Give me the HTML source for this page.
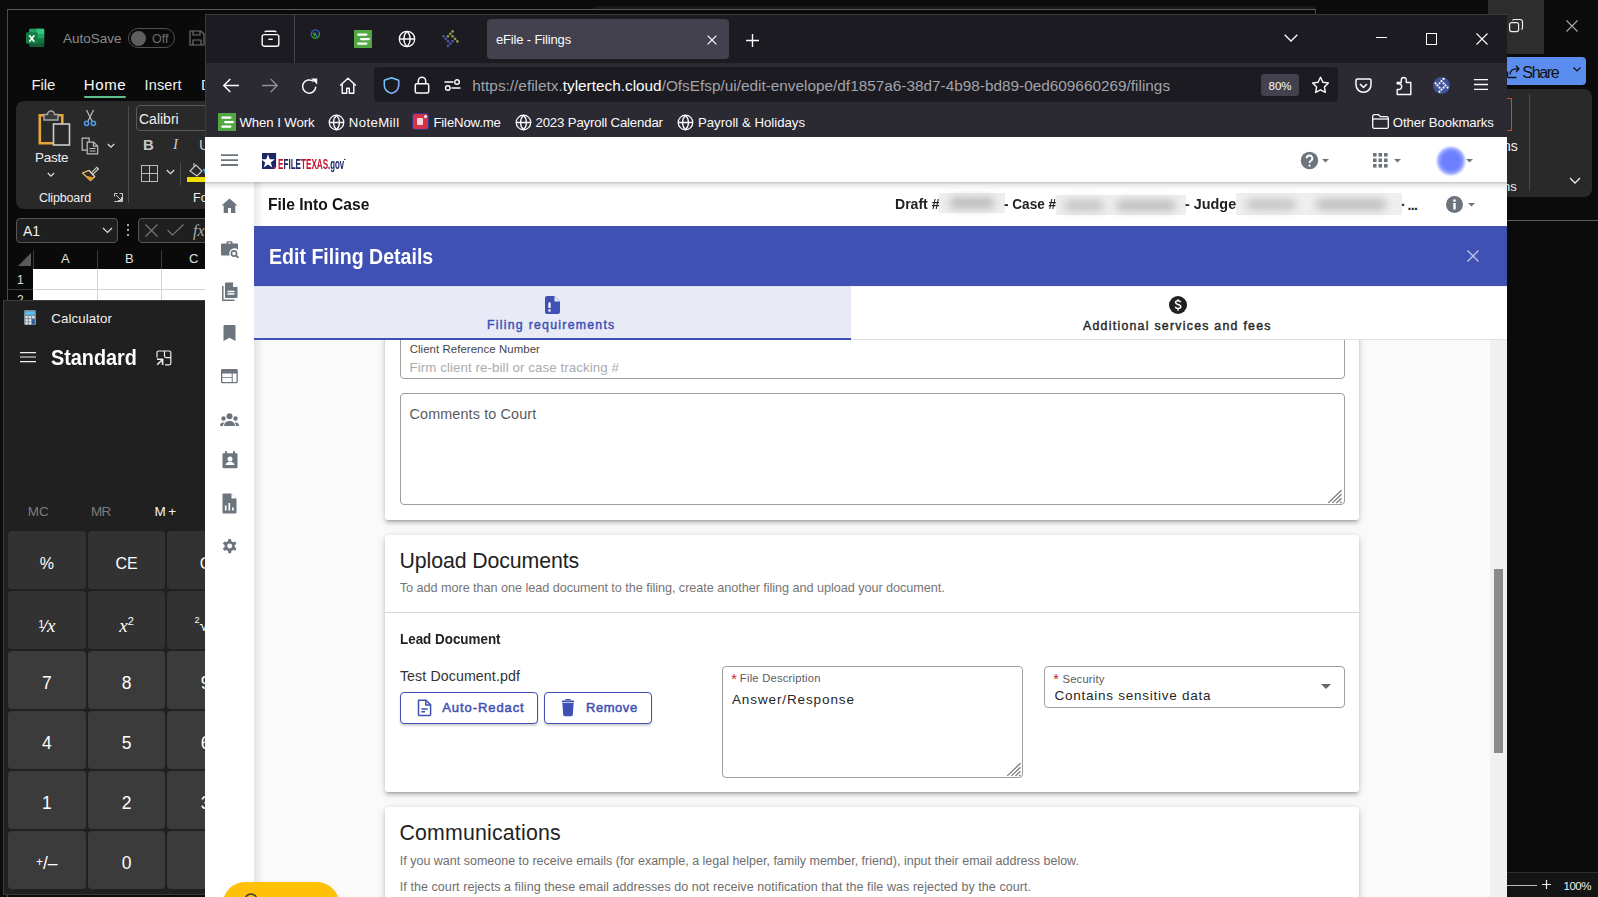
<!DOCTYPE html>
<html><head><meta charset="utf-8">
<style>
*{box-sizing:border-box;margin:0;padding:0}
html,body{width:1598px;height:897px;overflow:hidden;background:#0b0b0b;font-family:"Liberation Sans",sans-serif}
.a{position:absolute}
.t{position:absolute;white-space:nowrap;line-height:1}
svg.a{overflow:visible}
</style></head><body>
<!-- 10_excel.py -->
<div class="a" style="left:0px;top:0px;width:1598px;height:897px;background:#0b0b0b;"></div>
<div class="a" style="left:593px;top:5.5px;width:722px;height:5px;background:#181818;border-radius:4px 0 0 0"></div>
<div class="a" style="left:7px;top:9px;width:1309px;height:888px;background:#0a0a0a;border-left:1px solid #4a4a4a;border-top:1px solid #5c5c5c;border-right:1px solid #4a4a4a"></div>
<svg class="a" style="left:26px;top:28px" width="19" height="20" viewBox="0 0 19 20" ><rect x="3.2" y="0.8" width="15" height="18.2" rx="1.2" fill="#185c37"/><path d="M4.4 0.8h12.6a1.2 1.2 0 0 1 1.2 1.2v4.5H3.2V2a1.2 1.2 0 0 1 1.2-1.2z" fill="#21a366"/><path d="M10.7 0.8h6.3a1.2 1.2 0 0 1 1.2 1.2v4.5h-7.5z" fill="#33c481"/><rect x="3.2" y="6.4" width="15" height="4.3" fill="#21a366"/><rect x="3.2" y="10.6" width="15" height="4.3" fill="#107c41"/><rect x="0" y="4.3" width="11.6" height="11.4" rx="1.2" fill="#107c41"/><path d="M3.3 7.3l5 6.4M8.3 7.3l-5 6.4" stroke="#fff" stroke-width="1.7"/></svg>
<div class="t" style="left:63px;top:32.00px;font-size:13.5px;color:#8c8c8c;">AutoSave</div>
<div class="a" style="left:128px;top:28px;width:47px;height:20px;border:1.3px solid #505050;border-radius:10px"></div>
<div class="a" style="left:131px;top:31px;width:15px;height:15px;background:#5e5e5e;border-radius:50%"></div>
<div class="t" style="left:152px;top:33.00px;font-size:12.5px;color:#6e6e6e;">Off</div>
<svg class="a" style="left:189px;top:30px" width="16" height="16" viewBox="0 0 16 16" fill="none" stroke="#707070" stroke-width="1.2"><path d="M1 1h11l3 3v11H1z"/><path d="M4 1v4h7V1M4 15v-5h8v5"/></svg>
<div class="t" style="left:31.5px;top:77.00px;font-size:15px;color:#f0f0f0;letter-spacing:-0.09px;">File</div>
<div class="t" style="left:83.7px;top:77.00px;font-size:15px;color:#ffffff;letter-spacing:0.663px;">Home</div>
<div class="a" style="left:84px;top:95.5px;width:42px;height:2.5px;background:#5cc18a;border-radius:1px"></div>
<div class="t" style="left:144.61999999999998px;top:78.00px;font-size:14.5px;color:#f0f0f0;letter-spacing:0.119px;">Insert</div>
<div class="t" style="left:201px;top:77.00px;font-size:15px;color:#f0f0f0;">Data</div>
<div class="a" style="left:16px;top:101px;width:1300px;height:108px;background:#292929;border-radius:8px"></div>
<svg class="a" style="left:37px;top:109px" width="35" height="38" viewBox="0 0 35 38" ><path d="M2.8 6.3h22.5v28H2.8z" fill="none" stroke="#e8a33a" stroke-width="2.6"/><path d="M7 11V5.5h3.5a3.5 3.5 0 0 1 7 0H21V11z" fill="#3a3a3a" stroke="#a8a8a8" stroke-width="1.4"/><rect x="16.5" y="15" width="16" height="21" fill="#292929" stroke="#cccccc" stroke-width="1.6"/></svg>
<div class="t" style="left:34.96px;top:151.00px;font-size:13.5px;color:#f0f0f0;letter-spacing:-0.26px;">Paste</div>
<svg class="a" style="left:47px;top:172px" width="8" height="6" viewBox="0 0 8 6" fill="none" stroke="#ddd" stroke-width="1.3"><path d="M0.8 1l3.2 3.2L7.2 1"/></svg>
<svg class="a" style="left:83px;top:109px" width="14" height="18" viewBox="0 0 14 18" fill="none"><path d="M3.5 1l5.5 11M10.5 1L5 12" stroke="#c8c8c8" stroke-width="1.1"/><circle cx="3.6" cy="14.3" r="2.1" stroke="#4f9ee8" stroke-width="1.5"/><circle cx="10.4" cy="14.3" r="2.1" stroke="#4f9ee8" stroke-width="1.5"/></svg>
<svg class="a" style="left:81px;top:137px" width="18" height="18" viewBox="0 0 18 18" fill="none" stroke="#bdbdbd" stroke-width="1.2"><path d="M1.2 1.2h7v12h-7z"/><path d="M6.2 5.2h6.5l4 4v7.6H6.2z" fill="#292929"/><path d="M12.5 5.2v4h4M8.5 11.5h6M8.5 14h6"/></svg>
<svg class="a" style="left:107px;top:143px" width="8" height="6" viewBox="0 0 8 6" fill="none" stroke="#ddd" stroke-width="1.3"><path d="M0.8 1l3.2 3.2L7.2 1"/></svg>
<svg class="a" style="left:82px;top:166px" width="17" height="16" viewBox="0 0 17 16" ><path d="M0.5 7l8 7.6 4.3-3.8-5.8-6.4z" fill="none" stroke="#f2c46a" stroke-width="1.2" stroke-linejoin="round"/><path d="M3.5 9.6l5 4.7 3.3-2.8z" fill="#e8961e"/><path d="M7 4.4l5.8 6.4" stroke="#cfcfcf" stroke-width="1.3"/><path d="M9.6 6.6l5.2-5.2 1.6 1.6-5.2 5.2" fill="none" stroke="#cfcfcf" stroke-width="1.2"/></svg>
<div class="t" style="left:38.9px;top:192.00px;font-size:12.5px;color:#f0f0f0;letter-spacing:-0.163px;">Clipboard</div>
<svg class="a" style="left:114px;top:193px" width="9" height="9" viewBox="0 0 9 9" fill="none" stroke="#ccc" stroke-width="1"><path d="M0.5 3.5v-3h3M0.5 8.5h8v-8h-3M2 2l5.5 5.5M4 7.5h3.5V4"/></svg>
<div class="a" style="left:127.5px;top:106px;width:1px;height:97px;background:#4a4a4a;"></div>
<div class="a" style="left:136px;top:105px;width:140px;height:26px;background:#292929;border:1px solid #5a5a5a;border-radius:4px"></div>
<div class="t" style="left:139px;top:112.00px;font-size:14px;color:#f0f0f0;">Calibri</div>
<div class="t" style="left:143px;top:137.00px;font-size:15px;color:#c8c8c8;font-weight:bold;">B</div>
<div class="t" style="left:173px;top:137.30px;font-size:15px;color:#c8c8c8;font-family:'Liberation Serif',serif;font-style:italic;">I</div>
<div class="t" style="left:199px;top:137.00px;font-size:15px;color:#c8c8c8;">U</div>
<svg class="a" style="left:141px;top:165px" width="17" height="17" viewBox="0 0 17 17" fill="none" stroke="#bbb" stroke-width="1"><rect x="0.5" y="0.5" width="16" height="16"/><path d="M8.5 0.5v16M0.5 8.5h16"/></svg>
<svg class="a" style="left:166px;top:169px" width="9" height="6" viewBox="0 0 9 6" fill="none" stroke="#ddd" stroke-width="1.3"><path d="M0.8 1l3.7 3.7L8.2 1"/></svg>
<div class="a" style="left:180px;top:163px;width:1px;height:22px;background:#4a4a4a;"></div>
<svg class="a" style="left:188px;top:163px" width="20" height="14" viewBox="0 0 20 14" fill="none" stroke="#ccc" stroke-width="1.1"><path d="M2 8l6-6 6 6-5 5z"/><path d="M6 0v4"/><path d="M15.5 6c1.5 2 2 4 2 5" stroke="#4f9ee8" stroke-width="2"/></svg>
<div class="a" style="left:187px;top:177px;width:30px;height:5px;background:#f0e000;"></div>
<div class="t" style="left:193px;top:192.00px;font-size:12.5px;color:#f0f0f0;">Font</div>
<div class="a" style="left:16px;top:218px;width:102px;height:25px;background:#1f1f1f;border:1px solid #555;border-radius:4px"></div>
<div class="t" style="left:23px;top:224.00px;font-size:14px;color:#f0f0f0;">A1</div>
<svg class="a" style="left:102px;top:227px" width="11" height="7" viewBox="0 0 11 7" fill="none" stroke="#ddd" stroke-width="1.2"><path d="M1 1l4.5 4.5L10 1"/></svg>
<div class="a" style="left:127px;top:224px;width:2.2px;height:2.2px;background:#ddd;border-radius:1px"></div>
<div class="a" style="left:127px;top:229px;width:2.2px;height:2.2px;background:#ddd;border-radius:1px"></div>
<div class="a" style="left:127px;top:234px;width:2.2px;height:2.2px;background:#ddd;border-radius:1px"></div>
<div class="a" style="left:138px;top:218px;width:600px;height:25px;background:#1f1f1f;border:1px solid #555;border-radius:4px"></div>
<svg class="a" style="left:145px;top:224px" width="13" height="13" viewBox="0 0 13 13" stroke="#777" stroke-width="1.1"><path d="M0.5 0.5l12 12M12.5 0.5l-12 12"/></svg>
<svg class="a" style="left:167px;top:224px" width="17" height="12" viewBox="0 0 17 12" fill="none" stroke="#777" stroke-width="1.1"><path d="M0.5 6l5 5L16.5 0.5"/></svg>
<div class="t" style="left:193px;top:223.46px;font-size:16px;color:#aaa;font-family:'Liberation Serif',serif;font-style:italic;">fx</div>
<svg class="a" style="left:18px;top:253px" width="13" height="13" viewBox="0 0 13 13" ><path d="M13 0v13H0z" fill="#5a5a5a"/></svg>
<div class="a" style="left:33px;top:250px;width:1px;height:19px;background:#3a3a3a;"></div>
<div class="a" style="left:97px;top:250px;width:1px;height:19px;background:#3a3a3a;"></div>
<div class="a" style="left:161px;top:250px;width:1px;height:19px;background:#3a3a3a;"></div>
<div class="t" style="left:61px;top:252.00px;font-size:13px;color:#e0e0e0;">A</div>
<div class="t" style="left:125px;top:252.00px;font-size:13px;color:#e0e0e0;">B</div>
<div class="t" style="left:189px;top:252.00px;font-size:13px;color:#e0e0e0;">C</div>
<div class="a" style="left:33px;top:269px;width:1283px;height:40px;background:#ffffff;"></div>
<div class="a" style="left:33px;top:289px;width:1283px;height:1px;background:#d4d4d4;"></div>
<div class="a" style="left:97px;top:269px;width:1px;height:40px;background:#d4d4d4;"></div>
<div class="a" style="left:161px;top:269px;width:1px;height:40px;background:#d4d4d4;"></div>
<div class="a" style="left:8px;top:289px;width:25px;height:1px;background:#3a3a3a;"></div>
<div class="t" style="left:17px;top:274.00px;font-size:12px;color:#e0e0e0;">1</div>
<div class="t" style="left:17px;top:294.00px;font-size:12px;color:#e0e0e0;">2</div>
<div class="a" style="left:1488px;top:0px;width:56px;height:54px;background:#2d2d2d;"></div>
<svg class="a" style="left:1509px;top:19px" width="14" height="13" viewBox="0 0 14 13" fill="none" stroke="#eee" stroke-width="1.2"><rect x="0.6" y="3.6" width="9" height="9" rx="2"/><path d="M3.5 1.5a2 2 0 0 1 2-1h5.5a2.5 2.5 0 0 1 2.5 2.5v5.5a2 2 0 0 1-1 2"/></svg>
<svg class="a" style="left:1566px;top:20px" width="12" height="12" viewBox="0 0 12 12" stroke="#aaa" stroke-width="1.1"><path d="M0.5 0.5l11 11M11.5 0.5l-11 11"/></svg>
<div class="a" style="left:1480px;top:57px;width:106px;height:28px;background:#5b8def;border-radius:4px"></div>
<div class="t" style="left:1522.36px;top:65.00px;font-size:16px;color:#111;letter-spacing:-1.354px;">Share</div>
<svg class="a" style="left:1505px;top:63px" width="16" height="16" viewBox="0 0 16 16" fill="none" stroke="#111" stroke-width="1.3" stroke-linejoin="round"><path d="M2.5 8.5v4.8a1.2 1.2 0 0 0 1.2 1.2h7.8"/><path d="M4.8 11.5c.4-3.4 2.8-5.6 6.6-5.6h1.8M11 2.8l3 3.1-3 3.1"/></svg>
<svg class="a" style="left:1573px;top:67px" width="8" height="5" viewBox="0 0 8 5" fill="none" stroke="#111" stroke-width="1.2"><path d="M0.5 0.5l3.5 3.5 3.5-3.5"/></svg>
<div class="a" style="left:1460px;top:89px;width:132px;height:108px;background:#292929;border-radius:8px"></div>
<div class="a" style="left:1500px;top:98px;width:12px;height:33px;border:1px solid #d14e1a"></div>
<div class="t" style="left:1503px;top:139.00px;font-size:14px;color:#f0f0f0;">ns</div>
<div class="t" style="left:1503px;top:180.00px;font-size:13px;color:#f0f0f0;">ns</div>
<div class="a" style="left:1529px;top:94px;width:1px;height:97px;background:#4a4a4a;"></div>
<svg class="a" style="left:1569px;top:177px" width="12" height="7" viewBox="0 0 12 7" fill="none" stroke="#eee" stroke-width="1.3"><path d="M1 1l5 5 5-5"/></svg>
<div class="a" style="left:1507px;top:220px;width:91px;height:1px;background:#5a5a5a;"></div>
<div class="a" style="left:1507px;top:872px;width:91px;height:1px;background:#2e2e2e;"></div>
<div class="a" style="left:1507px;top:873px;width:91px;height:24px;background:#141414;"></div>
<div class="a" style="left:1507px;top:885px;width:30px;height:1.2px;background:#bbb;"></div>
<svg class="a" style="left:1542px;top:880px" width="9" height="9" viewBox="0 0 9 9" stroke="#eee" stroke-width="1.2"><path d="M4.5 0v9M0 4.5h9"/></svg>
<div class="t" style="left:1563.54px;top:881.00px;font-size:11.5px;color:#eee;letter-spacing:-0.498px;">100%</div>
<!-- 20_calc.py -->
<div class="a" style="left:3px;top:300px;width:215px;height:595px;background:#202020;border-left:1px solid #3c3c3c;border-top:1px solid #3c3c3c;border-bottom:1px solid #3a3a3a"></div>
<svg class="a" style="left:24px;top:310px" width="12" height="15" viewBox="0 0 12 15" ><rect x="0" y="0" width="12" height="15" rx="1.2" fill="#7a8a9a"/><rect x="1.5" y="1.5" width="9" height="3.2" fill="#4fc3f7"/><g fill="#e8e8e8"><rect x="1.5" y="6" width="2.3" height="2.2"/><rect x="4.85" y="6" width="2.3" height="2.2"/><rect x="8.2" y="6" width="2.3" height="2.2"/><rect x="1.5" y="9.2" width="2.3" height="2.2"/><rect x="4.85" y="9.2" width="2.3" height="2.2"/><rect x="1.5" y="12.2" width="2.3" height="2.2"/><rect x="4.85" y="12.2" width="2.3" height="2.2"/></g><rect x="8.2" y="9.2" width="2.3" height="5.2" fill="#1e5aa8"/></svg>
<div class="t" style="left:51.367999999999995px;top:312.00px;font-size:13.3px;color:#f0f0f0;letter-spacing:0.076px;">Calculator</div>
<svg class="a" style="left:20px;top:352px" width="16" height="11" viewBox="0 0 16 11" stroke="#eee" stroke-width="1.1"><path d="M0 0.6h16M0 5h16M0 9.6h16"/></svg>
<div class="t" style="left:51.107331362142105px;top:348.00px;font-size:21.5px;color:#ffffff;font-weight:bold;transform:scaleX(0.9217);transform-origin:0 0;">Standard</div>
<svg class="a" style="left:155.5px;top:349.5px" width="16" height="16" viewBox="0 0 16 16" fill="none" stroke="#eee" stroke-width="1.2"><path d="M1 7.5V2.5A1.5 1.5 0 0 1 2.5 1h10.8a1.5 1.5 0 0 1 1.5 1.5v10.8a1.5 1.5 0 0 1-1.5 1.5H9M8.5 1v4.8a1.8 1.8 0 0 0 1.8 1.8h4.5"/><path d="M1.2 14.8L6 10M1 9.3h5.6v5.6" stroke-width="1.6"/></svg>
<div class="t" style="left:27.66px;top:505.00px;font-size:13.5px;color:#7c7c7c;letter-spacing:0.085px;">MC</div>
<div class="t" style="left:90.96px;top:505.00px;font-size:13.5px;color:#7c7c7c;letter-spacing:-0.615px;">MR</div>
<div class="t" style="left:154.46px;top:505.00px;font-size:13.5px;color:#f2f2f2;letter-spacing:2.551px;">M+</div>
<div class="a" style="left:8px;top:531px;width:77.5px;height:57.5px;background:#323232;border-radius:4px"></div>
<div class="t" style="left:8px;top:556.00px;font-size:16px;color:#ffffff;width:77.5px;text-align:center;">%</div>
<div class="a" style="left:88px;top:531px;width:77px;height:57.5px;background:#323232;border-radius:4px"></div>
<div class="t" style="left:88px;top:556.00px;font-size:16px;color:#ffffff;width:77px;text-align:center;">CE</div>
<div class="a" style="left:167px;top:531px;width:77px;height:57.5px;background:#323232;border-radius:4px"></div>
<div class="t" style="left:167px;top:556.00px;font-size:16px;color:#ffffff;width:77px;text-align:center;">C</div>
<div class="a" style="left:8px;top:591px;width:77.5px;height:57.5px;background:#323232;border-radius:4px"></div>
<div class="t" style="left:8px;top:616.00px;font-size:16px;color:#ffffff;width:77.5px;text-align:center;"><span style="font-size:11px;vertical-align:4px">1</span>&#8260;<i style="font-family:'Liberation Serif',serif;font-size:19px">x</i></div>
<div class="a" style="left:88px;top:591px;width:77px;height:57.5px;background:#323232;border-radius:4px"></div>
<div class="t" style="left:88px;top:616.00px;font-size:16px;color:#ffffff;width:77px;text-align:center;"><i style="font-family:'Liberation Serif',serif;font-size:19px">x</i><span style="font-size:11px;vertical-align:7px">2</span></div>
<div class="a" style="left:167px;top:591px;width:77px;height:57.5px;background:#323232;border-radius:4px"></div>
<div class="t" style="left:167px;top:616.00px;font-size:16px;color:#ffffff;width:77px;text-align:center;"><span style="font-size:9px;vertical-align:8px">2</span>&#8730;x</div>
<div class="a" style="left:8px;top:651px;width:77.5px;height:57.5px;background:#3b3b3b;border-radius:4px"></div>
<div class="t" style="left:8px;top:675.00px;font-size:17.5px;color:#ffffff;width:77.5px;text-align:center;">7</div>
<div class="a" style="left:88px;top:651px;width:77px;height:57.5px;background:#3b3b3b;border-radius:4px"></div>
<div class="t" style="left:88px;top:675.00px;font-size:17.5px;color:#ffffff;width:77px;text-align:center;">8</div>
<div class="a" style="left:167px;top:651px;width:77px;height:57.5px;background:#3b3b3b;border-radius:4px"></div>
<div class="t" style="left:167px;top:675.00px;font-size:17.5px;color:#ffffff;width:77px;text-align:center;">9</div>
<div class="a" style="left:8px;top:711px;width:77.5px;height:57.5px;background:#3b3b3b;border-radius:4px"></div>
<div class="t" style="left:8px;top:735.00px;font-size:17.5px;color:#ffffff;width:77.5px;text-align:center;">4</div>
<div class="a" style="left:88px;top:711px;width:77px;height:57.5px;background:#3b3b3b;border-radius:4px"></div>
<div class="t" style="left:88px;top:735.00px;font-size:17.5px;color:#ffffff;width:77px;text-align:center;">5</div>
<div class="a" style="left:167px;top:711px;width:77px;height:57.5px;background:#3b3b3b;border-radius:4px"></div>
<div class="t" style="left:167px;top:735.00px;font-size:17.5px;color:#ffffff;width:77px;text-align:center;">6</div>
<div class="a" style="left:8px;top:771px;width:77.5px;height:57.5px;background:#3b3b3b;border-radius:4px"></div>
<div class="t" style="left:8px;top:795.00px;font-size:17.5px;color:#ffffff;width:77.5px;text-align:center;">1</div>
<div class="a" style="left:88px;top:771px;width:77px;height:57.5px;background:#3b3b3b;border-radius:4px"></div>
<div class="t" style="left:88px;top:795.00px;font-size:17.5px;color:#ffffff;width:77px;text-align:center;">2</div>
<div class="a" style="left:167px;top:771px;width:77px;height:57.5px;background:#3b3b3b;border-radius:4px"></div>
<div class="t" style="left:167px;top:795.00px;font-size:17.5px;color:#ffffff;width:77px;text-align:center;">3</div>
<div class="a" style="left:8px;top:831px;width:77.5px;height:57.5px;background:#3b3b3b;border-radius:4px"></div>
<div class="t" style="left:8px;top:855.00px;font-size:17.5px;color:#ffffff;width:77.5px;text-align:center;"><span style="font-size:12px;vertical-align:3px">+</span>/&#8211;</div>
<div class="a" style="left:88px;top:831px;width:77px;height:57.5px;background:#3b3b3b;border-radius:4px"></div>
<div class="t" style="left:88px;top:855.00px;font-size:17.5px;color:#ffffff;width:77px;text-align:center;">0</div>
<div class="a" style="left:167px;top:831px;width:77px;height:57.5px;background:#3b3b3b;border-radius:4px"></div>
<div class="t" style="left:167px;top:855.00px;font-size:17.5px;color:#ffffff;width:77px;text-align:center;"></div>
<!-- 30_ffchrome.py -->
<div class="a" style="left:205px;top:14px;width:1302px;height:883px;background:#fafafa;"></div>
<div class="a" style="left:205px;top:14px;width:1302px;height:49px;background:#1c1b22;border-top:1px solid #3b3a41;border-left:1px solid #3b3a41"></div>
<div class="a" style="left:294px;top:14px;width:1px;height:49px;background:#45444b;"></div>
<svg class="a" style="left:261px;top:30px" width="19" height="17" viewBox="0 0 19 17" fill="none" stroke="#fbfbfe" stroke-width="1.4"><path d="M3.8 2.2a2 2 0 0 1 1.6-.9h8.2a2 2 0 0 1 1.6 .9"/><rect x="1.2" y="4.6" width="16.6" height="11.6" rx="2"/><path d="M7.3 9.3h4.4"/></svg>
<svg class="a" style="left:310px;top:29px" width="11" height="11" viewBox="0 0 11 11" ><path d="M1.5 6.6A4.1 4.1 0 0 1 9.2 3.6" fill="none" stroke="#2f62c0" stroke-width="1.3"/><path d="M9.2 3.6A4.1 4.1 0 0 1 1.5 6.6" fill="none" stroke="#3e9a3a" stroke-width="1.3"/><path d="M3.3 3.6l1.8 3.6" stroke="#49a83e" stroke-width="1.4"/><path d="M5.4 3.6l1.3 4.2" stroke="#3a70d0" stroke-width="1.2"/></svg>
<svg class="a" style="left:354px;top:30px" width="18" height="18" viewBox="0 0 18 18" ><rect width="18" height="18" fill="#52a742"/><path d="M4.3 4.6h8.1M7.1 9.1h7.8M4.3 13.6h8.1" stroke="#fff" stroke-width="2.2" stroke-linecap="round"/></svg>
<svg class="a" style="left:398px;top:30px" width="18" height="18" viewBox="0 0 18 18" fill="none" stroke="#fbfbfe" stroke-width="1.3"><circle cx="9" cy="9" r="7.7"/><path d="M9 1.3c-4.2 4.2-4.2 11.2 0 15.4M9 1.3c4.2 4.2 4.2 11.2 0 15.4M1.3 9h15.4"/></svg>
<svg class="a" style="left:438px;top:26px" width="26" height="26" viewBox="0 0 26 26" ><circle cx="14.6" cy="5.4" r="1.35" fill="#8c9c42"/><circle cx="12.3" cy="7.8" r="1.35" fill="#8c9c42"/><circle cx="10" cy="10.3" r="1.35" fill="#8c9c42"/><circle cx="14.6" cy="10.3" r="1.35" fill="#8c9c42"/><circle cx="17.1" cy="12.8" r="1.35" fill="#8c9c42"/><circle cx="19.4" cy="15.4" r="1.35" fill="#8c9c42"/><circle cx="5.5" cy="10.3" r="1.35" fill="#4d52a6"/><circle cx="7.7" cy="12.8" r="1.35" fill="#4d52a6"/><circle cx="10" cy="15.2" r="1.35" fill="#4d52a6"/><circle cx="14.6" cy="15.2" r="1.35" fill="#4d52a6"/><circle cx="12.3" cy="17.7" r="1.35" fill="#4d52a6"/><circle cx="10" cy="20.1" r="1.35" fill="#4d52a6"/></svg>
<div class="a" style="left:487px;top:19px;width:242px;height:40px;background:#42414d;border-radius:4px"></div>
<div class="t" style="left:495.88px;top:33.00px;font-size:13px;color:#fbfbfe;letter-spacing:-0.14px;">eFile - Filings</div>
<svg class="a" style="left:707px;top:35px" width="10" height="10" viewBox="0 0 10 10" stroke="#fbfbfe" stroke-width="1.3"><path d="M0.6 0.6l8.8 8.8M9.4 0.6L0.6 9.4"/></svg>
<svg class="a" style="left:746px;top:33.5px" width="13" height="13" viewBox="0 0 13 13" stroke="#fbfbfe" stroke-width="1.4"><path d="M6.5 0v13M0 6.5h13"/></svg>
<svg class="a" style="left:1284px;top:34px" width="14" height="8" viewBox="0 0 14 8" fill="none" stroke="#fbfbfe" stroke-width="1.3"><path d="M0.7 0.7L7 7l6.3-6.3"/></svg>
<div class="a" style="left:1376px;top:37px;width:11px;height:1px;background:#fbfbfe;"></div>
<div class="a" style="left:1425.5px;top:33px;width:11.5px;height:11.5px;border:1px solid #fbfbfe"></div>
<svg class="a" style="left:1476px;top:33px" width="12" height="12" viewBox="0 0 12 12" stroke="#fbfbfe" stroke-width="1.1"><path d="M0.5 0.5l11 11M11.5 0.5l-11 11"/></svg>
<div class="a" style="left:205px;top:63px;width:1302px;height:74px;background:#2b2a33;border-left:1px solid #3b3a41"></div>
<svg class="a" style="left:222px;top:78px" width="18" height="16" viewBox="0 0 18 16" fill="none" stroke="#fbfbfe" stroke-width="1.5"><path d="M17 7.5H1.8M8.3 1L1.8 7.5 8.3 14"/></svg>
<svg class="a" style="left:262px;top:78px" width="17" height="16" viewBox="0 0 17 16" fill="none" stroke="#8f8f9d" stroke-width="1.3"><path d="M0 7.5h15.2M8.7 1l6.5 6.5L8.7 14"/></svg>
<svg class="a" style="left:301px;top:78px" width="17" height="17" viewBox="0 0 17 17" fill="none" stroke="#fbfbfe" stroke-width="1.5"><path d="M14.8 8.8a6.6 6.6 0 1 1-2.3-5.3"/><path d="M10.2 0.4h6v6z" fill="#fbfbfe" stroke="none"/></svg>
<svg class="a" style="left:339px;top:77px" width="18" height="17" viewBox="0 0 18 17" fill="none" stroke="#fbfbfe" stroke-width="1.4" stroke-linejoin="round"><path d="M1.2 8.5L9 1.2l7.8 7.3M3.2 6.8v9.4h4.5v-5h2.6v5h4.5V6.8"/></svg>
<div class="a" style="left:374px;top:67px;width:964px;height:35px;background:#1c1b22;border-radius:4px"></div>
<svg class="a" style="left:383px;top:77px" width="17" height="17" viewBox="0 0 17 17" ><path d="M8.5 0.8L15.7 3.2v5c0 4-3 6.8-7.2 8.2C4.3 15 1.3 12.2 1.3 8.2v-5z" fill="none" stroke="#74c6ff" stroke-width="1.5" stroke-linejoin="round"/><path d="M15.7 4.5v3.7c0 4-3 6.8-7.2 8.2" fill="none" stroke="#8d86f0" stroke-width="1.5" opacity="0.6"/></svg>
<svg class="a" style="left:414px;top:76px" width="16" height="18" viewBox="0 0 16 18" fill="none" stroke="#fbfbfe" stroke-width="1.5"><rect x="1.3" y="7.8" width="13.4" height="9.2" rx="1.5"/><path d="M4.3 7.8V5a3.7 3.7 0 0 1 7.4 0v2.8"/></svg>
<svg class="a" style="left:444px;top:79px" width="17" height="12" viewBox="0 0 17 12" fill="none" stroke="#fbfbfe" stroke-width="1.4"><path d="M0.5 3h9M7.5 9h9"/><circle cx="13" cy="3" r="2.3"/><circle cx="3.8" cy="9" r="2.3"/></svg>
<div class="t" style="left:472.3px;top:78.00px;font-size:15.35px;color:#a3a3ab;">https://efiletx.<span style="color:#fbfbfe">tylertech.cloud</span>/OfsEfsp/ui/edit-envelope/df1857a6-38d7-4b98-bd89-0ed609660269/filings</div>
<div class="a" style="left:1261px;top:74px;width:38px;height:22px;background:#42414d;border-radius:3px"></div>
<div class="t" style="left:1268.5px;top:81.00px;font-size:11.5px;color:#fbfbfe;">80%</div>
<svg class="a" style="left:1311px;top:76px" width="19" height="18" viewBox="0 0 19 18" fill="none" stroke="#fbfbfe" stroke-width="1.4" stroke-linejoin="round"><path d="M9.5 1.2l2.4 5 5.5.8-4 3.9.95 5.5L9.5 13.8l-4.85 2.6.95-5.5-4-3.9 5.5-.8z"/></svg>
<svg class="a" style="left:1355px;top:78px" width="17" height="15" viewBox="0 0 17 15" fill="none" stroke="#fbfbfe" stroke-width="1.5" stroke-linejoin="round"><path d="M1 2.3A1.3 1.3 0 0 1 2.3 1h12.4A1.3 1.3 0 0 1 16 2.3v4.5a7.5 7.5 0 0 1-15 0z"/><path d="M5 6l3.5 3.4L12 6"/></svg>
<svg class="a" style="left:1395.5px;top:76.7px" width="16" height="18" viewBox="0 0 16 18" fill="none" stroke="#fbfbfe" stroke-width="1.4" stroke-linejoin="round"><path d="M1.2 5.5H5.3V3a2.5 2.5 0 0 1 5 0v2.5h4.5v12H1.2v-5h1.6a2.9 2.9 0 0 0 0-5.8H1.2z"/></svg>
<svg class="a" style="left:1433px;top:76.5px" width="17" height="17" viewBox="0 0 17 17" ><circle cx="8.5" cy="8.5" r="8.5" fill="#3f529a"/><circle cx="10.6" cy="1.9" r="1.1" fill="#fff"/><circle cx="8.5" cy="4.2" r="1.1" fill="#fff"/><circle cx="2.6" cy="6.3" r="1.1" fill="#fff"/><circle cx="6.5" cy="6.3" r="1.1" fill="#fff"/><circle cx="10.6" cy="6.3" r="1.1" fill="#fff"/><circle cx="4.4" cy="8.4" r="1.1" fill="#fff"/><circle cx="12.5" cy="8.4" r="1.1" fill="#fff"/><circle cx="6.5" cy="10.6" r="1.1" fill="#fff"/><circle cx="10.6" cy="10.6" r="1.1" fill="#fff"/><circle cx="14.5" cy="10.6" r="1.1" fill="#fff"/><circle cx="8.5" cy="12.6" r="1.1" fill="#fff"/><circle cx="6.5" cy="14.7" r="1.1" fill="#fff"/></svg>
<svg class="a" style="left:1474px;top:79px" width="14" height="11" viewBox="0 0 14 11" stroke="#fbfbfe" stroke-width="1.3"><path d="M0 0.7h14M0 5.5h14M0 10.3h14"/></svg>
<svg class="a" style="left:218px;top:113px" width="18" height="18" viewBox="0 0 18 18" ><rect width="18" height="18" fill="#52a742"/><path d="M4.3 4.6h8.1M7.1 9.1h7.8M4.3 13.6h8.1" stroke="#fff" stroke-width="2.2" stroke-linecap="round"/></svg>
<div class="t" style="left:239.472px;top:116.00px;font-size:13.2px;color:#fbfbfe;letter-spacing:-0.079px;">When I Work</div>
<svg class="a" style="left:328px;top:114px" width="17" height="17" viewBox="0 0 18 18" fill="none" stroke="#fbfbfe" stroke-width="1.35"><circle cx="9" cy="9" r="7.7"/><path d="M9 1.3c-4.2 4.2-4.2 11.2 0 15.4M9 1.3c4.2 4.2 4.2 11.2 0 15.4M1.3 9h15.4"/></svg>
<div class="t" style="left:348.772px;top:116.00px;font-size:13.2px;color:#fbfbfe;letter-spacing:0.383px;">NoteMill</div>
<div class="a" style="left:412px;top:113px;width:17px;height:17px;background:#d0334a;border:1.5px solid #35358a;border-radius:3px"><div class="a" style="left:4px;top:3.5px;width:6px;height:7.5px;background:#f7d4da;border-radius:1px"></div>
<div class="a" style="left:10.5px;top:0.5px;width:3.5px;height:3.5px;background:#fff;border-radius:50%"></div>
</div>
<div class="t" style="left:433.472px;top:116.00px;font-size:13.2px;color:#fbfbfe;letter-spacing:-0.166px;">FileNow.me</div>
<svg class="a" style="left:514.5px;top:114px" width="17" height="17" viewBox="0 0 18 18" fill="none" stroke="#fbfbfe" stroke-width="1.35"><circle cx="9" cy="9" r="7.7"/><path d="M9 1.3c-4.2 4.2-4.2 11.2 0 15.4M9 1.3c4.2 4.2 4.2 11.2 0 15.4M1.3 9h15.4"/></svg>
<div class="t" style="left:535.472px;top:116.00px;font-size:13.2px;color:#fbfbfe;letter-spacing:-0.148px;">2023 Payroll Calendar</div>
<svg class="a" style="left:676.5px;top:114px" width="17" height="17" viewBox="0 0 18 18" fill="none" stroke="#fbfbfe" stroke-width="1.35"><circle cx="9" cy="9" r="7.7"/><path d="M9 1.3c-4.2 4.2-4.2 11.2 0 15.4M9 1.3c4.2 4.2 4.2 11.2 0 15.4M1.3 9h15.4"/></svg>
<div class="t" style="left:697.972px;top:116.00px;font-size:13.2px;color:#fbfbfe;letter-spacing:0.003px;">Payroll &amp; Holidays</div>
<svg class="a" style="left:1372px;top:114px" width="17" height="15" viewBox="0 0 17 15" fill="none" stroke="#fbfbfe" stroke-width="1.3"><path d="M0.7 2.2A1.5 1.5 0 0 1 2.2 0.7h4.3l2 2h6.3a1.5 1.5 0 0 1 1.5 1.5v8.6a1.5 1.5 0 0 1-1.5 1.5H2.2a1.5 1.5 0 0 1-1.5-1.5z"/><path d="M0.7 5h15.6"/></svg>
<div class="t" style="left:1392.872px;top:116.00px;font-size:13.2px;color:#fbfbfe;letter-spacing:-0.11px;">Other Bookmarks</div>
<!-- 40_page.py -->
<div class="a" style="left:0;top:0;width:1598px;height:897px;clip-path:inset(340px 91px 0px 254px);">
<div class="a" style="left:254px;top:340px;width:1253px;height:557px;background:#fafafa;"></div>
<div class="a" style="left:254px;top:340px;width:10px;height:557px;background:linear-gradient(to right,rgba(0,0,0,.09),rgba(0,0,0,0))"></div>
<div class="a" style="left:385px;top:250px;width:974px;height:270px;background:#fff;box-shadow:0 1px 8px 0 rgba(0,0,0,.12),0 3px 4px 0 rgba(0,0,0,.14),0 3px 3px -2px rgba(0,0,0,.2),0 0 1px rgba(0,0,0,.15);border-radius:2.5px"></div>
<div class="a" style="left:400px;top:320px;width:945px;height:59px;border:1px solid #9e9e9e;border-radius:4px"></div>
<div class="t" style="left:409.644px;top:344.00px;font-size:11.4px;color:#454545;letter-spacing:0.077px;">Client Reference Number</div>
<div class="t" style="left:409.56800000000004px;top:361.00px;font-size:13.3px;color:#ababab;letter-spacing:0.085px;">Firm client re-bill or case tracking #</div>
<div class="a" style="left:400px;top:393px;width:945px;height:112px;border:1px solid #9e9e9e;border-radius:4px"></div>
<div class="t" style="left:409.528px;top:407.00px;font-size:14.3px;color:#5a5a5a;letter-spacing:0.173px;">Comments to Court</div>
<svg class="a" style="left:1327px;top:489px" width="16" height="16" viewBox="0 0 16 16" fill="none" stroke="#7a7a7a" stroke-width="1.3"><path d="M1.3 13.9L14.5 1.3M5.4 13.9L14.5 5.3M9.4 13.9L14.5 9.3M13.3 13.9L14.5 12.8"/></svg>
<div class="a" style="left:385px;top:535px;width:974px;height:257px;background:#fff;box-shadow:0 1px 8px 0 rgba(0,0,0,.12),0 3px 4px 0 rgba(0,0,0,.14),0 3px 3px -2px rgba(0,0,0,.2),0 0 1px rgba(0,0,0,.15);border-radius:2.5px"></div>
<div class="t" style="left:399.44800000000004px;top:551.00px;font-size:21.3px;color:#222;letter-spacing:-0.089px;">Upload Documents</div>
<div class="t" style="left:399.79200000000003px;top:582.00px;font-size:12.7px;color:#767676;letter-spacing:-0.061px;">To add more than one lead document to the filing, create another filing and upload your document.</div>
<div class="a" style="left:385px;top:612px;width:974px;height:1px;background:#d6d6d6;"></div>
<div class="t" style="left:400.06368244576976px;top:633.00px;font-size:13.8px;color:#222;font-weight:bold;transform:scaleX(0.9716);transform-origin:0 0;">Lead Document</div>
<div class="t" style="left:399.932px;top:669.00px;font-size:14.2px;color:#333;letter-spacing:0.103px;">Test Document.pdf</div>
<div class="a" style="left:400px;top:692px;width:138px;height:32px;background:#fff;border:1px solid #3f51b5;border-radius:4px;box-shadow:0 2px 2px rgba(0,0,0,.18)"></div>
<svg class="a" style="left:417px;top:699px" width="15" height="17" viewBox="0 0 15 17" fill="none" stroke="#3f51b5" stroke-width="1.5" stroke-linejoin="round"><path d="M1.5 1.3h7.5l4.6 4.6v9.6a1 1 0 0 1-1 1H2.5a1 1 0 0 1-1-1z"/><path d="M8.8 1.3v4.8h4.8M4.3 10h6.4M4.3 12.8h3.8"/></svg>
<div class="t" style="left:442.28000000000003px;top:701.00px;font-size:13px;color:#3f51b5;letter-spacing:0.918px;-webkit-text-stroke:0.5px #3f51b5">Auto-Redact</div>
<div class="a" style="left:544px;top:692px;width:108px;height:32px;background:#fff;border:1px solid #3f51b5;border-radius:4px;box-shadow:0 2px 2px rgba(0,0,0,.18)"></div>
<svg class="a" style="left:561px;top:699px" width="14" height="17" viewBox="0 0 14 17" fill="none" stroke="#3f51b5" stroke-width="1.2"><path d="M1 2.4h12" stroke="#3f51b5" stroke-width="1.8"/><path d="M5 1.6V0.6h4v1"/><path d="M2 4.5h10l-0.8 11.2a1 1 0 0 1-1 .9H3.8a1 1 0 0 1-1-.9z" fill="#3f51b5"/></svg>
<div class="t" style="left:585.98px;top:701.00px;font-size:13px;color:#3f51b5;letter-spacing:0.547px;-webkit-text-stroke:0.5px #3f51b5">Remove</div>
<div class="a" style="left:722px;top:666px;width:301px;height:112px;border:1px solid #9e9e9e;border-radius:4px"></div>
<div class="t" style="left:731.3px;top:672.00px;font-size:14.5px;color:#c62828;">*</div>
<div class="t" style="left:739.852px;top:673.00px;font-size:11.2px;color:#5c5c5c;letter-spacing:0.234px;">File Description</div>
<div class="t" style="left:731.96px;top:693.00px;font-size:13.5px;color:#262626;letter-spacing:0.887px;">Answer/Response</div>
<svg class="a" style="left:1005.5px;top:762px" width="16" height="16" viewBox="0 0 16 16" fill="none" stroke="#7a7a7a" stroke-width="1.3"><path d="M1.3 13.9L14.5 1.3M5.4 13.9L14.5 5.3M9.4 13.9L14.5 9.3M13.3 13.9L14.5 12.8"/></svg>
<div class="a" style="left:1044px;top:666px;width:301px;height:42px;border:1px solid #9e9e9e;border-radius:4px"></div>
<div class="t" style="left:1053.3px;top:672.00px;font-size:14.5px;color:#c62828;">*</div>
<div class="t" style="left:1062.448px;top:674.00px;font-size:11.3px;color:#5c5c5c;letter-spacing:0.169px;">Security</div>
<div class="t" style="left:1054.46px;top:689.00px;font-size:13.5px;color:#262626;letter-spacing:0.754px;">Contains sensitive data</div>
<svg class="a" style="left:1321px;top:684px" width="10" height="5" viewBox="0 0 10 5" ><path d="M0 0h10L5 5z" fill="#666"/></svg>
<div class="a" style="left:385px;top:807px;width:974px;height:200px;background:#fff;box-shadow:0 1px 8px 0 rgba(0,0,0,.12),0 3px 4px 0 rgba(0,0,0,.14),0 3px 3px -2px rgba(0,0,0,.2),0 0 1px rgba(0,0,0,.15);border-radius:2.5px"></div>
<div class="t" style="left:399.44800000000004px;top:823.00px;font-size:21.3px;color:#222;letter-spacing:0.198px;">Communications</div>
<div class="t" style="left:399.8px;top:855.00px;font-size:12.5px;color:#6e6e6e;letter-spacing:-0.003px;">If you want someone to receive emails (for example, a legal helper, family member, friend), input their email address below.</div>
<div class="t" style="left:399.8px;top:881.00px;font-size:12.5px;color:#6e6e6e;letter-spacing:0.067px;">If the court rejects a filing these email addresses do not receive notification that the file was rejected by the court.</div>
<div class="a" style="left:1490px;top:340px;width:17px;height:557px;background:#f0f0f0;"></div>
<div class="a" style="left:1494px;top:569px;width:9px;height:184px;background:#8a8a8a;"></div>
</div>
<div class="a" style="left:205px;top:182px;width:49px;height:715px;background:#fff;"></div>
<svg class="a" style="left:221.0px;top:198.0px" width="17" height="16" viewBox="0 0 17 16" fill="#6c757d"><path d="M8.5 0.5L0.5 7.5h2.2v7.5h4.3v-5h3v5h4.3V7.5h2.2z"/></svg>
<svg class="a" style="left:220.5px;top:241.0px" width="18" height="18" viewBox="0 0 18 18" fill="#6c757d"><path d="M5.5 2.5V1.2a1 1 0 0 1 1-1h4a1 1 0 0 1 1 1v1.3H16a1 1 0 0 1 1 1v5.2a5.2 5.2 0 0 0-8.3 5.8H1a1 1 0 0 1-1-1V3.5a1 1 0 0 1 1-1zM7 2.5h3V1.4H7z" fill-rule="evenodd"/><circle cx="13" cy="12.5" r="2.6" fill="none" stroke="#6c757d" stroke-width="1.6"/><path d="M14.9 14.4l2.4 2.4" stroke="#6c757d" stroke-width="1.8"/></svg>
<svg class="a" style="left:221.5px;top:281.5px" width="16" height="19" viewBox="0 0 16 19" fill="#6c757d"><path d="M4 0.5h7l4.5 4.5v10a1 1 0 0 1-1 1H4a1 1 0 0 1-1-1v-13.5a1 1 0 0 1 1-1z"/><path d="M5.5 9.5h7M5.5 12h7" stroke="#fff" stroke-width="1.3"/><path d="M11 0.5v4.5h4.5" fill="#fff"/><path d="M0.8 4v14.2h11.7" fill="none" stroke="#6c757d" stroke-width="1.5"/></svg>
<svg class="a" style="left:223.0px;top:325.0px" width="13" height="16" viewBox="0 0 13 16" fill="#6c757d"><path d="M0.5 1a1 1 0 0 1 1-1h10a1 1 0 0 1 1 1v15l-6-3.3-6 3.3z"/></svg>
<svg class="a" style="left:221.1px;top:368.9px" width="16.8" height="14.2" viewBox="0 0 16.8 14.2" fill="#6c757d"><path d="M1.5 0h13.8A1.5 1.5 0 0 1 16.8 1.5v11.2a1.5 1.5 0 0 1-1.5 1.5H1.5A1.5 1.5 0 0 1 0 12.7V1.5A1.5 1.5 0 0 1 1.5 0zM1.3 4.6v3.4h9.4V4.6zM1.3 8.8v4.1h9.4V8.8zM11.7 4.6v8.3h3.8V4.6z" fill-rule="evenodd"/></svg>
<svg class="a" style="left:220.0px;top:412.5px" width="19" height="13" viewBox="0 0 19 13" fill="#6c757d"><circle cx="9.5" cy="3.2" r="3"/><circle cx="3.5" cy="5.5" r="2.2"/><circle cx="15.5" cy="5.5" r="2.2"/><path d="M4 13c0-3 2.5-5 5.5-5s5.5 2 5.5 5z"/><path d="M0 13c0-2 1-3.6 3.3-3.6.5 0 .9 0 1.2.2C3.5 10.6 3 11.8 3 13zM19 13c0-2-1-3.6-3.3-3.6-.5 0-.9 0-1.2.2 1 1 1.5 2.2 1.5 3.4z"/></svg>
<svg class="a" style="left:221.5px;top:451.0px" width="16" height="18" viewBox="0 0 16 18" fill="#6c757d"><path d="M3 0.2h2v2h6v-2h2v2h1.5a1 1 0 0 1 1 1v13a1 1 0 0 1-1 1H1.5a1 1 0 0 1-1-1v-13a1 1 0 0 1 1-1H3z"/><circle cx="8" cy="8" r="2.5" fill="#fff"/><path d="M3.5 14c0-2 2-3.3 4.5-3.3s4.5 1.3 4.5 3.3z" fill="#fff"/></svg>
<svg class="a" style="left:222.0px;top:492.5px" width="15" height="21" viewBox="0 0 15 21" fill="#6c757d"><path d="M1.5 0.5h8l5 5v14a1 1 0 0 1-1 1h-12a1 1 0 0 1-1-1V1.5a1 1 0 0 1 1-1z"/><path d="M9.5 0.5v5h5" fill="#fff"/><path d="M3.7 17.5v-5M7.3 17.5v-7.5M10.9 17.5v-3" stroke="#fff" stroke-width="1.7"/></svg>
<svg class="a" style="left:220.8px;top:538.9px" width="17.4" height="14.2" viewBox="0 0 17.4 14.2" fill="#6c757d"><path d="M7.4 0h2.6l.4 2.3c.6.2 1.1.5 1.6.9l2.2-.8 1.3 2.3-1.8 1.5c.1.6.1 1.2 0 1.8l1.8 1.5-1.3 2.3-2.2-.8c-.5.4-1 .7-1.6.9L10 14.2H7.4L7 11.9c-.6-.2-1.1-.5-1.6-.9l-2.2.8-1.3-2.3 1.8-1.5c-.1-.6-.1-1.2 0-1.8L1.9 4.7l1.3-2.3 2.2.8c.5-.4 1-.7 1.6-.9z"/><circle cx="8.7" cy="7.1" r="2.5" fill="#fff"/></svg>
<div class="a" style="left:254px;top:182px;width:1253px;height:44px;background:#fff;"></div>
<div class="a" style="left:254px;top:182px;width:10px;height:44px;background:linear-gradient(to right,rgba(0,0,0,.09),rgba(0,0,0,0))"></div>
<div class="t" style="left:267.57646625848975px;top:196.00px;font-size:16.5px;color:#141414;font-weight:bold;transform:scaleX(0.9447);transform-origin:0 0;">File Into Case</div>
<div class="t" style="left:895.0377292366476px;top:197.00px;font-size:14px;color:#222;font-weight:bold;transform:scaleX(1.0041);transform-origin:0 0;">Draft #</div>
<div class="a" style="left:939px;top:193px;width:66px;height:20px;background:#efefef;filter:blur(0.5px)"><div class="a" style="left:10px;top:4px;width:46px;height:12px;background:#bdbdbd;filter:blur(4px);border-radius:6px"></div>
</div>
<div class="t" style="left:1004.4567893529714px;top:197.00px;font-size:14px;color:#222;font-weight:bold;transform:scaleX(0.9700);transform-origin:0 0;">- Case #</div>
<div class="a" style="left:1056px;top:195px;width:130px;height:20px;background:#efefef;filter:blur(0.5px)"><div class="a" style="left:8px;top:5px;width:40px;height:11px;background:#c4c4c4;filter:blur(4px);border-radius:6px"></div>
<div class="a" style="left:60px;top:5px;width:60px;height:11px;background:#bdbdbd;filter:blur(4px);border-radius:6px"></div>
</div>
<div class="t" style="left:1185.4245703945965px;top:197.00px;font-size:14px;color:#222;font-weight:bold;transform:scaleX(1.0276);transform-origin:0 0;">- Judge</div>
<div class="a" style="left:1236px;top:193px;width:166px;height:22px;background:#efefef;filter:blur(0.5px)"><div class="a" style="left:10px;top:6px;width:50px;height:11px;background:#c4c4c4;filter:blur(4px);border-radius:6px"></div>
<div class="a" style="left:80px;top:6px;width:70px;height:11px;background:#bdbdbd;filter:blur(4px);border-radius:6px"></div>
</div>
<div class="t" style="left:1401px;top:198.00px;font-size:14px;color:#222;font-weight:bold;">&#183;</div>
<div class="t" style="left:1407.5px;top:198.00px;font-size:14px;color:#222;font-weight:bold;letter-spacing:-0.6px;">...</div>
<svg class="a" style="left:1445.5px;top:195.5px" width="17" height="17" viewBox="0 0 17 17" ><circle cx="8.5" cy="8.5" r="8.5" fill="#6c757d"/><rect x="7.3" y="7" width="2.4" height="6.5" fill="#fff"/><circle cx="8.5" cy="4.6" r="1.3" fill="#fff"/></svg>
<svg class="a" style="left:1467.5px;top:203px" width="7" height="4" viewBox="0 0 7 4" ><path d="M0 0h7L3.5 3.5z" fill="#6c757d"/></svg>
<div class="a" style="left:254px;top:226px;width:1253px;height:60px;background:#3f51b5;"></div>
<div class="t" style="left:268.51681403865047px;top:246.00px;font-size:22.3px;color:#fff;font-weight:bold;transform:scaleX(0.8780);transform-origin:0 0;">Edit Filing Details</div>
<svg class="a" style="left:1467px;top:250px" width="12" height="12" viewBox="0 0 12 12" stroke="#c5cae9" stroke-width="1.3"><path d="M0.5 0.5l11 11M11.5 0.5l-11 11"/></svg>
<div class="a" style="left:254px;top:286px;width:597px;height:54px;background:#e8eaf6;border-bottom:2px solid #3f51b5"></div>
<div class="a" style="left:851px;top:286px;width:656px;height:54px;background:#fff;border-bottom:1px solid #e0e0e0"></div>
<div class="a" style="left:254px;top:286px;width:1253px;height:1px;background:rgba(0,0,0,.05);"></div>
<svg class="a" style="left:545px;top:296px" width="15" height="18" viewBox="0 0 15 18" ><path d="M2 0h7.5L15 5.5V16a2 2 0 0 1-2 2H2a2 2 0 0 1-2-2V2a2 2 0 0 1 2-2z" fill="#3f51b5"/><path d="M9.5 0.3v5.2H14.7z" fill="#e8eaf6"/><rect x="3.4" y="6.5" width="2.2" height="5.5" fill="#fff"/><rect x="3.4" y="13.4" width="2.2" height="2.2" fill="#fff"/></svg>
<div class="t" style="left:487.008px;top:319.00px;font-size:12.3px;color:#3f51b5;letter-spacing:1.261px;-webkit-text-stroke:0.45px #3f51b5">Filing requirements</div>
<svg class="a" style="left:1169px;top:296px" width="18" height="18" viewBox="0 0 18 18" ><circle cx="9" cy="9" r="9" fill="#212121"/><path d="M11.6 6.3c-.3-1-1.2-1.6-2.6-1.6-1.5 0-2.5.8-2.5 1.9 0 2.4 5.3 1.4 5.3 4 0 1.2-1.1 2-2.7 2-1.5 0-2.5-.7-2.8-1.8M9 3.2v1.5M9 13.1v1.6" fill="none" stroke="#fff" stroke-width="1.5"/></svg>
<div class="t" style="left:1083.008px;top:320.00px;font-size:12.3px;color:#2a2a2a;letter-spacing:1.271px;-webkit-text-stroke:0.45px #2a2a2a">Additional services and fees</div>
<div class="a" style="left:205px;top:137px;width:1302px;height:45px;background:#fff;"></div>
<div class="a" style="left:205px;top:182px;width:1302px;height:8px;background:linear-gradient(rgba(0,0,0,.22),rgba(0,0,0,.08) 35%,rgba(0,0,0,0))"></div>
<svg class="a" style="left:221px;top:154px" width="17" height="12" viewBox="0 0 17 12" stroke="#6c757d" stroke-width="1.8"><path d="M0 1.2h17M0 6.2h17M0 11h17"/></svg>
<svg class="a" style="left:261.7px;top:153.2px" width="15" height="16.5" viewBox="0 0 15 16.5" ><path d="M0 0h14.1v13.2l-2.6 2.7H0z" fill="#1c2766"/><path d="M6.00 1.30L7.72 6.24L12.94 6.34L8.78 9.50L10.29 14.51L6.00 11.52L1.71 14.51L3.22 9.50L-0.94 6.34L4.28 6.24z" fill="#fff"/><path d="M12.6 13.4h1.6l-1.2 2.6h-1.2z" fill="#c8102e"/></svg>
<div class="t" style="left:278.1747422829257px;top:156.00px;font-size:15.4px;color:#1c2766;font-weight:bold;transform:scaleX(0.5280);transform-origin:0 0;"><span style="color:#c8102e">E</span>FILE<span style="color:#c8102e">TEXAS</span></div>
<div class="t" style="left:327.6861814658837px;top:156.00px;font-size:15.4px;color:#1c2766;font-weight:bold;transform:scaleX(0.5094);transform-origin:0 0;">.gov</div>
<svg class="a" style="left:344px;top:159px" width="2" height="2" viewBox="0 0 2 2" ><rect width="1.5" height="1" fill="#1c2766"/></svg>
<svg class="a" style="left:1300px;top:151px" width="19" height="19" viewBox="0 0 19 19" ><circle cx="9.5" cy="9.5" r="8.7" fill="#6c757d"/><path d="M6.7 7.3a2.8 2.8 0 1 1 4.2 2.4c-1 .6-1.4 1-1.4 2.2" fill="none" stroke="#fff" stroke-width="1.9"/><circle cx="9.5" cy="14.6" r="1.1" fill="#fff"/></svg>
<svg class="a" style="left:1322px;top:159px" width="7" height="4" viewBox="0 0 7 4" ><path d="M0 0h7L3.5 3.5z" fill="#6c757d"/></svg>
<svg class="a" style="left:1373px;top:153px" width="15" height="15" viewBox="0 0 15 15" ><rect x="0.0" y="0.0" width="3.6" height="3.6" fill="#6c757d"/><rect x="0.0" y="5.5" width="3.6" height="3.6" fill="#6c757d"/><rect x="0.0" y="11.0" width="3.6" height="3.6" fill="#6c757d"/><rect x="5.5" y="0.0" width="3.6" height="3.6" fill="#6c757d"/><rect x="5.5" y="5.5" width="3.6" height="3.6" fill="#6c757d"/><rect x="5.5" y="11.0" width="3.6" height="3.6" fill="#6c757d"/><rect x="11.0" y="0.0" width="3.6" height="3.6" fill="#6c757d"/><rect x="11.0" y="5.5" width="3.6" height="3.6" fill="#6c757d"/><rect x="11.0" y="11.0" width="3.6" height="3.6" fill="#6c757d"/></svg>
<svg class="a" style="left:1394px;top:159px" width="7" height="4" viewBox="0 0 7 4" ><path d="M0 0h7L3.5 3.5z" fill="#6c757d"/></svg>
<div class="a" style="left:1437px;top:146.5px;width:28px;height:28px;border-radius:50%;background:radial-gradient(circle,#6b7fff 0,#6b7fff 45%,rgba(107,127,255,.6) 70%,rgba(107,127,255,0) 100%);filter:blur(1px)"></div>
<svg class="a" style="left:1465.5px;top:159px" width="7" height="4" viewBox="0 0 7 4" ><path d="M0 0h7L3.5 3.5z" fill="#6c757d"/></svg>
<div class="a" style="left:222.5px;top:882px;width:116px;height:44px;background:#ffc107;border-radius:22px;box-shadow:0 3px 5px rgba(0,0,0,.2)"></div>
<svg class="a" style="left:244px;top:893px" width="14" height="10" viewBox="0 0 14 10" fill="none" stroke="#3d3d3d" stroke-width="1.7"><circle cx="7" cy="7" r="6"/></svg>
</body></html>
